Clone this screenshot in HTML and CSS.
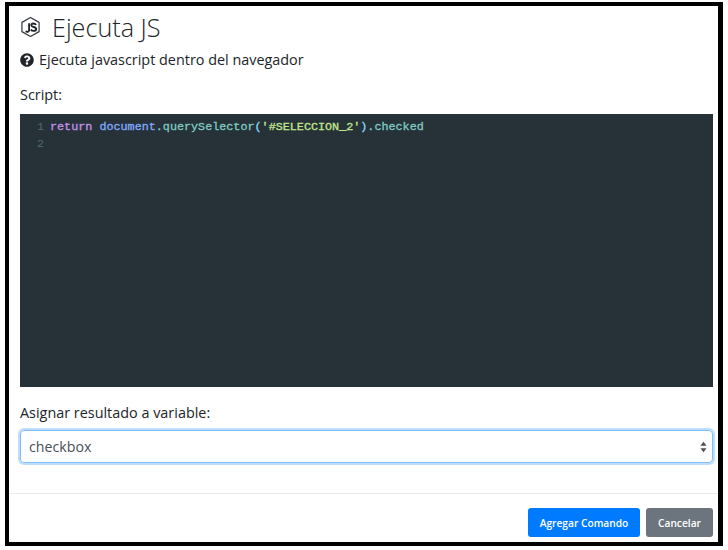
FILE: index.html
```html
<!DOCTYPE html>
<html lang="es">
<head>
<meta charset="utf-8">
<title>Ejecuta JS</title>
<link rel="stylesheet" href="styles.css">
</head>
<body>
<div class="frame">
  <div class="body">
    <h1 class="title">
      <svg class="node" viewBox="0 0 24 24" width="21" height="22" aria-hidden="true">
        <path d="M12 1.2 21.8 6.7V17.3L12 22.8 2.2 17.3V6.7Z" fill="none" stroke="#343a40" stroke-width="1.4" stroke-linejoin="round"/>
        <path d="M10.4 7.6V15.8C10.4 17.6 8.2 18 6.4 16.8" fill="none" stroke="#212529" stroke-width="2.1"/>
        <path d="M18.4 9.6C17.2 7.6 13 7.2 12.9 10 12.8 12.6 18.6 11.4 18.5 14.4 18.3 17.2 13.6 17 12.4 14.8" fill="none" stroke="#212529" stroke-width="2.1"/>
      </svg>
      <span>Ejecuta JS</span>
    </h1>
    <p class="hint">
      <svg class="q" viewBox="0 0 512 512" width="14" height="14" aria-hidden="true">
        <path fill="#212529" d="M504 256c0 137-111 248-248 248S8 393 8 256 119 8 256 8s248 111 248 248zM263 90c-54 0-89 23-116 63-4 5-3 12 3 16l35 26c5 4 13 3 17-2 18-22 30-35 57-35 20 0 45 13 45 33 0 15-12 23-33 34-24 13-55 30-55 71v6c0 7 5 12 12 12h56c7 0 12-5 12-12v-4c0-29 84-30 84-107 0-58-60-101-117-101zm-7 248c-25 0-46 21-46 46s21 46 46 46 46-21 46-46-21-46-46-46z"/>
      </svg>
      <span>Ejecuta javascript dentro del navegador</span>
    </p>
    <label class="label">Script:</label>
    <div class="editor">
      <div class="line"><span class="num">1</span><code><span class="kw">return</span> <span class="obj">document</span><span class="prop">.querySelector</span><span class="pun">(</span><span class="str">'#SELECCION_2'</span><span class="pun">)</span><span class="prop">.checked</span></code></div>
      <div class="line"><span class="num">2</span></div>
    </div>
    <label class="label label-var">Asignar resultado a variable:</label>
    <div class="select">
      <span>checkbox</span>
      <svg viewBox="0 0 8 12" width="7" height="12" aria-hidden="true"><path fill="#495057" d="M4 0 7.5 4.6H.5ZM4 12 .5 7.4H7.5Z"/></svg>
    </div>
  </div>
  <div class="footer">
    <button class="btn primary">Agregar Comando</button>
    <button class="btn secondary">Cancelar</button>
  </div>
</div>
</body>
</html>
```
FILE: styles.css
```css
* { box-sizing: border-box; }
html, body { margin: 0; height: 100%; background: #fff; }
body { padding: 2px 5px 4px 5px; font-family: "Open Sans", sans-serif; color: #212529; }
.frame {
  width: 718px;
  height: 544px;
  border: 4px solid #000;
  border-right-width: 5px;
  display: flex;
  flex-direction: column;
  background: #fff;
}
.body { padding: 4px 5px 0 11px; flex: 1; }
.title {
  margin: 0;
  display: flex;
  align-items: center;
  gap: 11px;
  font-size: 25.2px;
  font-weight: 300;
  line-height: 34px;
  color: #212529;
}
.hint {
  margin: 6px 0 0;
  display: flex;
  align-items: center;
  gap: 5px;
  font-size: 14.4px;
  line-height: 20px;
}
.label { display: block; font-size: 14.4px; line-height: 20px; margin-top: 15px; }
.editor {
  margin-top: 9px;
  height: 273px;
  background: #263238;
  padding-top: 5px;
  font-family: "Liberation Mono", monospace;
  font-size: 11.75px;
  line-height: 16.5px;
}
.line { display: flex; }
.num { width: 24px; text-align: right; color: #4f6b6e; }
.line code { font: inherit; margin-left: 6px; white-space: pre; color: #eeffff; -webkit-text-stroke: 0.3px; }
.kw { color: #c792ea; }
.obj { color: #82aaff; }
.prop { color: #80cbc4; }
.pun { color: #89ddff; }
.str { color: #c3e88d; }
.label-var { margin-top: 16px; }
.select {
  margin-top: 7px;
  height: 33px;
  border: 1px solid #80bdff;
  border-radius: 4px;
  box-shadow: 0 0 0 2px rgba(0, 123, 255, .25);
  display: flex;
  align-items: center;
  justify-content: space-between;
  padding: 0 5px 0 8px;
  font-size: 14.2px;
  color: #495057;
}
.footer {
  height: 49px;
  border-top: 1px solid #e9ecef;
  display: flex;
  justify-content: flex-end;
  align-items: flex-start;
  gap: 6px;
  padding: 14px 5px 0 0;
}
.btn {
  height: 29px;
  border: 0;
  border-radius: 3px;
  padding: 0;
  font-family: "Open Sans", sans-serif;
  font-size: 10.2px;
  font-weight: 600;
  color: #fff;
}
.primary { width: 112px; background: #007bff; }
.secondary { width: 67px; background: #6c757d; }
```
